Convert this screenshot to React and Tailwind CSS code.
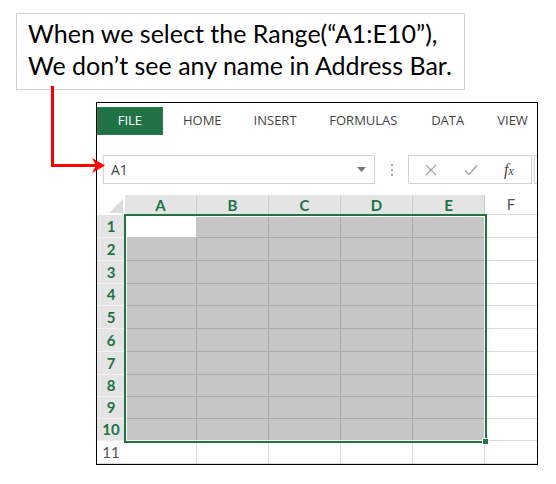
import React from "react";

const ROWH = [23, 23, 23, 22, 23, 23, 23, 22, 22, 22];
const COLS = ["A", "B", "C", "D", "E"];

function Row({ n, h, selected }) {
  return (
    <div className="flex" style={{ height: h }}>
      <div
        className={
          selected
            ? "w-[28px] shrink-0 bg-[#e4e4e4] border-b border-[#f2f2f2] flex items-center justify-center text-[15px] font-bold text-[#217346] font-['Lato']"
            : "w-[28px] shrink-0 bg-white border-b border-[#dadada] flex items-center justify-center text-[15px] text-[#555] font-['Lato']"
        }
      >
        {n}
      </div>
      {COLS.map((c, i) => {
        const active = selected && n === 1 && i === 0;
        let cls = "w-[72px] shrink-0 ";
        if (active) cls += "bg-white border-r border-b border-[#c6c6c6]";
        else if (selected) cls += "bg-[#c6c6c6] border-r border-b border-[#ababab]";
        else cls += "bg-white border-r border-b border-[#dadada]";
        return <div key={c} className={cls} />;
      })}
      <div className="flex-1 bg-white border-b border-[#dadada]" />
    </div>
  );
}

export default function App() {
  return (
    <div className="w-[556px] h-[484px] bg-white relative overflow-hidden">
      {/* callout */}
      <div className="ml-[16px] mt-[13px] w-[449px] h-[77px] border border-[#d4d4d4] pl-[11px] pt-[3px] font-['Lato'] text-[25px] leading-[32px] text-black">
        <div>When we select the Range(“A1:E10”),</div>
        <div>We don’t see any name in Address Bar.</div>
      </div>

      {/* excel window */}
      <div className="ml-[96px] mt-[12px] w-[442px] h-[363px] border border-black relative overflow-hidden font-['Open_Sans'] bg-white">
        {/* ribbon tabs */}
        <div className="mt-[4px] h-[28px] flex items-center text-[13px] text-[#444]">
          <div className="w-[66px] h-[28px] bg-[#217346] border border-[#2a7d4f] text-white flex items-center justify-center">
            FILE
          </div>
          <div className="ml-[2px] w-[75px] text-center">HOME</div>
          <div className="w-[71px] text-center">INSERT</div>
          <div className="w-[106px] text-center">FORMULAS</div>
          <div className="w-[63px] text-center">DATA</div>
          <div className="ml-[9px] w-[49px] text-center">VIEW</div>
        </div>

        {/* formula bar */}
        <div className="mt-[20px] h-[29px] flex">
          <div className="ml-[6px] w-[272px] h-[29px] border border-[#d4d4d4] flex items-center pl-[7px] pr-[8px]">
            <span className="text-[14px] text-[#444] flex-1">A1</span>
            <svg width="9" height="5" viewBox="0 0 9 5">
              <polygon points="0,0 9,0 4.5,5" fill="#777" />
            </svg>
          </div>
          <div className="w-[33px] flex flex-col items-center justify-center gap-[3px]">
            <div className="w-[2px] h-[2px] bg-[#aaa]" />
            <div className="w-[2px] h-[2px] bg-[#aaa]" />
            <div className="w-[2px] h-[2px] bg-[#aaa]" />
          </div>
          <div className="w-[124px] h-[29px] border border-[#d4d4d4] flex items-center">
            <div className="w-[43px] flex justify-center">
              <svg width="12" height="12" viewBox="0 0 12 12">
                <path d="M1 1 L11 11 M11 1 L1 11" stroke="#a8a8a8" strokeWidth="1.3" />
              </svg>
            </div>
            <div className="w-[38px] flex justify-center">
              <svg width="14" height="12" viewBox="0 0 14 12">
                <path d="M1 6.5 L5 10.5 L13 1.5" stroke="#a8a8a8" strokeWidth="1.5" fill="none" />
              </svg>
            </div>
            <div className="w-[38px] flex justify-center">
              <span className="font-['Liberation_Serif'] italic text-[16px] text-[#444]">
                f<span className="text-[12px]">x</span>
              </span>
            </div>
          </div>
          <div className="ml-[2px] flex-1 h-[29px] border-l border-t border-b border-[#d4d4d4]" />
        </div>

        {/* column headers */}
        <div className="mt-[11px] h-[20px] flex">
          <div className="w-[28px] h-[20px] bg-white flex items-end justify-end pr-[2px] pb-[2px]">
            <svg width="14" height="14" viewBox="0 0 14 14">
              <polygon points="14,0 14,14 0,14" fill="#dcdcdc" />
            </svg>
          </div>
          {COLS.map((c) => (
            <div
              key={c}
              className="w-[72px] h-[20px] bg-[#e4e4e4] border-r border-[#cfcfcf] flex items-center justify-center text-[15px] font-bold text-[#217346] font-['Lato']"
            >
              {c}
            </div>
          ))}
          <div className="flex-1 h-[20px] bg-white border-b border-[#dadada] flex items-center justify-center text-[15px] text-[#555] font-['Lato']">
            F
          </div>
        </div>

        {/* grid */}
        {ROWH.map((h, i) => (
          <Row key={i} n={i + 1} h={h} selected />
        ))}
        <Row n={11} h={23} selected={false} />

        {/* selection border */}
        <div className="absolute left-[27px] top-[111px] w-[363px] h-[229px] border-2 border-[#217346] shadow-[inset_0_0_0_1px_white]" />
        <div className="absolute left-[385px] top-[335px] w-[7px] h-[7px] bg-[#217346] border border-white" />
      </div>

      {/* red arrow */}
      <svg className="absolute left-0 top-0 pointer-events-none" width="556" height="484" viewBox="0 0 556 484">
        <path d="M52.5 86 L52.5 165.5 L96 165.5" stroke="#ff0000" strokeWidth="3" fill="none" />
        <polygon points="92,158 105,165.5 92,173 96,165.5" fill="#ff0000" />
      </svg>
    </div>
  );
}
